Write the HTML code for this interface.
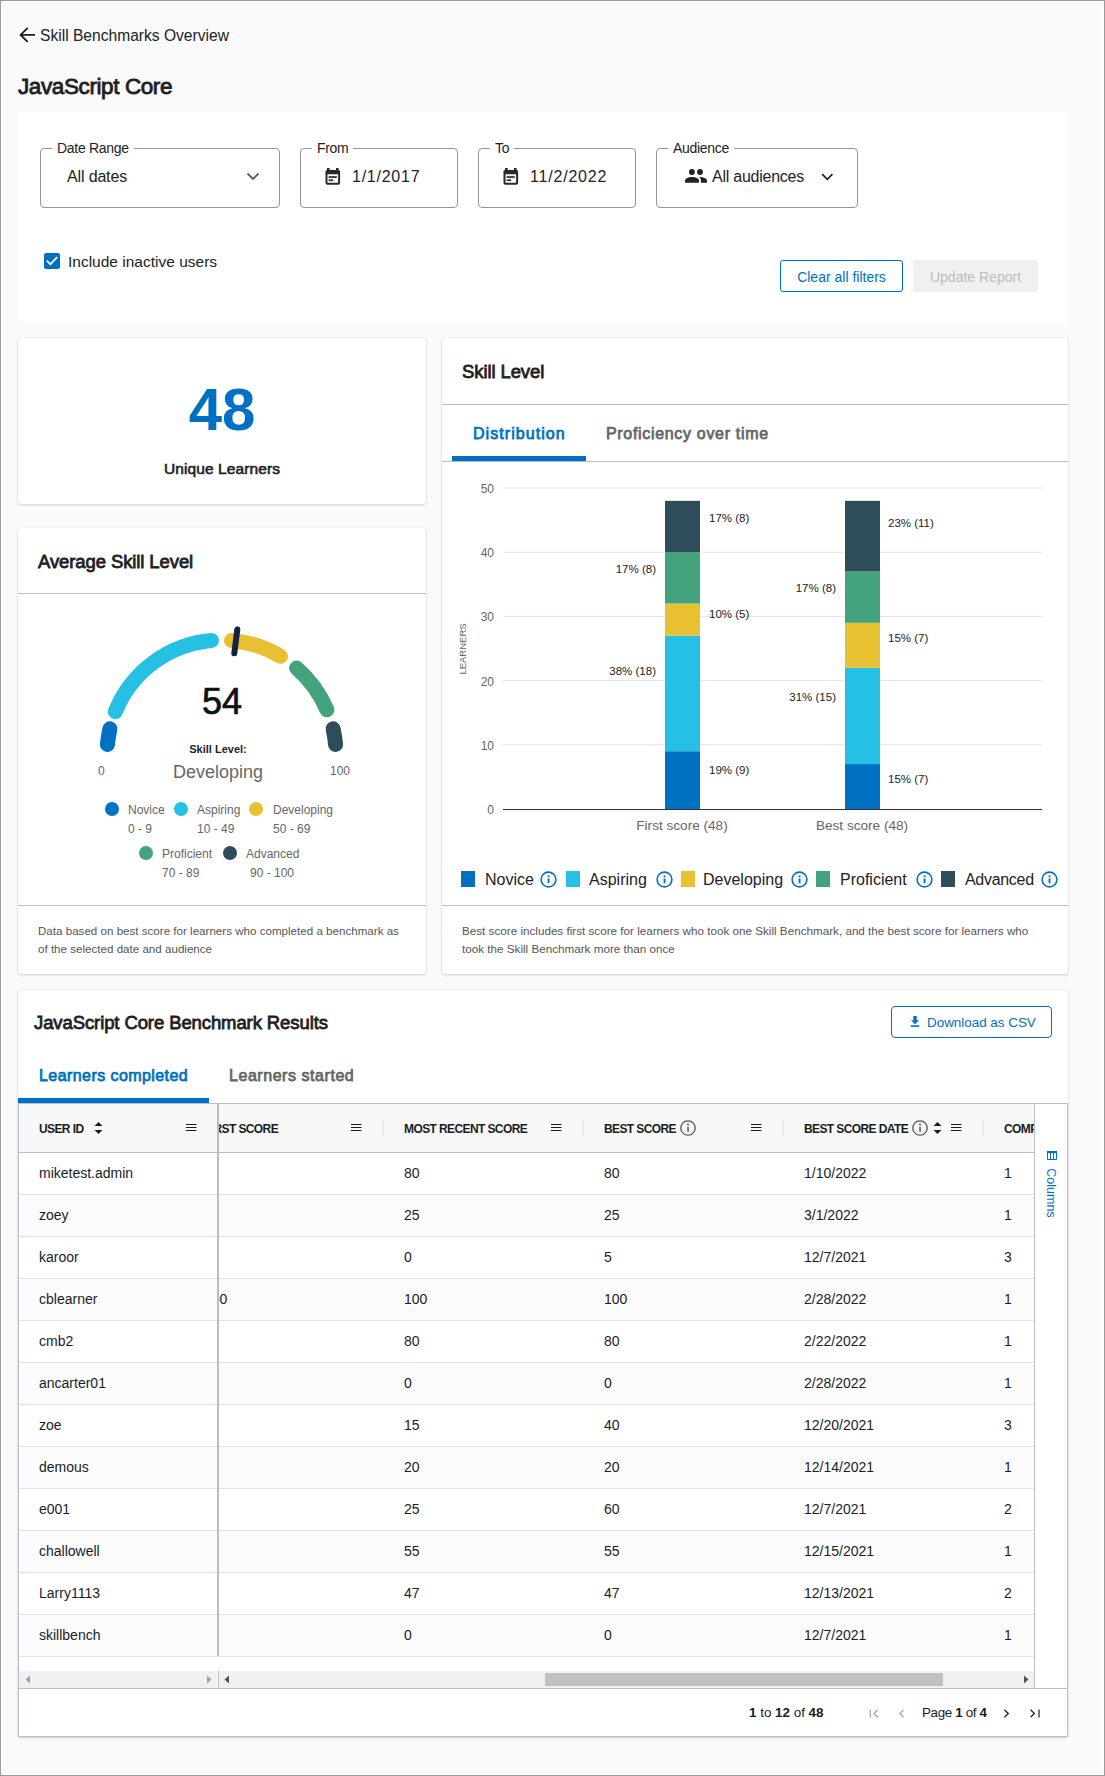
<!DOCTYPE html>
<html><head><meta charset="utf-8">
<style>
*{box-sizing:border-box;margin:0;padding:0}
html,body{width:1105px;height:1776px;overflow:hidden}
body{background:#f9fafb;font-family:"Liberation Sans",sans-serif;color:#1f1f1f;position:relative}
.a{position:absolute;white-space:nowrap}
.frame{position:absolute;left:0;top:0;width:1105px;height:1776px;border:1px solid #9c9c9c;box-shadow:inset 0 0 0 1px #fff;pointer-events:none;z-index:50}
.card{position:absolute;background:#fff;border-radius:3px;box-shadow:0 1px 3px rgba(0,0,0,.16),0 0 1px rgba(0,0,0,.14)}
.fs{position:absolute;border:1px solid #969696;border-radius:4px;background:#fff}
.fs .lg{position:absolute;top:-10px;left:11px;background:#fff;padding:0 5px 0 5px;font-size:14px;color:#222;line-height:18px;letter-spacing:-0.3px}
.hr{position:absolute;height:1px;background:#bdbdbd}
.blue{color:#0070c2}
</style></head><body>
<div class="frame"></div>

<!-- header -->
<svg class="a" style="left:18px;top:27px" width="18" height="16" viewBox="0 0 18 16"><path d="M17 7.9H3M9.7 0.9L2.6 7.9l7.1 7" stroke="#1f1f1f" stroke-width="1.9" fill="none"/></svg>
<div class="a" style="left:40px;top:26px;font-size:15.6px;line-height:19px;color:#222">Skill Benchmarks Overview</div>
<div class="a" style="left:18px;top:74px;font-size:22.5px;line-height:26px;color:#1f1f1f;-webkit-text-stroke:0.85px #1f1f1f;letter-spacing:-0.4px">JavaScript Core</div>

<!-- filter card -->
<div class="card" style="left:18px;top:112px;width:1050px;height:210px;box-shadow:none"></div>
<div class="fs" style="left:40px;top:148px;width:240px;height:60px"><span class="lg">Date Range</span></div>
<div class="a" style="left:67px;top:167px;font-size:16px;line-height:20px;color:#222;letter-spacing:-0.15px">All dates</div>
<svg class="a" style="left:246px;top:172px" width="14" height="9"><path d="M1.5 1.5l5.5 5.5 5.5-5.5" stroke="#5c5c5c" stroke-width="1.9" fill="none"/></svg>

<div class="fs" style="left:300px;top:148px;width:158px;height:60px"><span class="lg">From</span></div>
<svg class="a" style="left:325px;top:167.5px" width="16" height="17" viewBox="0 0 16 17"><rect x="2" y="0" width="2.6" height="3" fill="#2a2a2a"/><rect x="11" y="0" width="2.6" height="3" fill="#2a2a2a"/><rect x="1.5" y="3" width="12.6" height="12.8" rx="1.6" fill="none" stroke="#2a2a2a" stroke-width="2"/><rect x="0.8" y="2.2" width="14" height="4" rx="1" fill="#2a2a2a"/><rect x="3.6" y="8.2" width="8.2" height="1.7" fill="#2a2a2a"/><rect x="3.6" y="11.4" width="4.6" height="1.7" fill="#2a2a2a"/></svg>
<div class="a" style="left:352px;top:167px;font-size:16px;line-height:20px;color:#222;letter-spacing:0.75px">1/1/2017</div>

<div class="fs" style="left:478px;top:148px;width:158px;height:60px"><span class="lg">To</span></div>
<svg class="a" style="left:503px;top:167.5px" width="16" height="17" viewBox="0 0 16 17"><rect x="2" y="0" width="2.6" height="3" fill="#2a2a2a"/><rect x="11" y="0" width="2.6" height="3" fill="#2a2a2a"/><rect x="1.5" y="3" width="12.6" height="12.8" rx="1.6" fill="none" stroke="#2a2a2a" stroke-width="2"/><rect x="0.8" y="2.2" width="14" height="4" rx="1" fill="#2a2a2a"/><rect x="3.6" y="8.2" width="8.2" height="1.7" fill="#2a2a2a"/><rect x="3.6" y="11.4" width="4.6" height="1.7" fill="#2a2a2a"/></svg>
<div class="a" style="left:530px;top:167px;font-size:16px;line-height:20px;color:#222;letter-spacing:0.8px">11/2/2022</div>

<div class="fs" style="left:656px;top:148px;width:202px;height:60px"><span class="lg">Audience</span></div>
<svg class="a" style="left:684px;top:168px" width="24" height="16" viewBox="0 0 24 16"><g fill="#222"><circle cx="7.9" cy="4" r="2.95"/><circle cx="16" cy="4" r="2.95"/><path d="M1.1 14.8v-2.3c0-2.2 3.5-3.6 6.95-3.6s6.95 1.4 6.95 3.6v2.3z"/><path d="M16.9 14.8v-2.3c0-1.4-.6-2.6-1.6-3.5 3.6 0 7.7 1.3 7.7 3.5v2.3z"/></g></svg>
<div class="a" style="left:712px;top:167px;font-size:16px;line-height:20px;color:#222;letter-spacing:-0.25px">All audiences</div>
<svg class="a" style="left:821px;top:172.5px" width="13" height="9"><path d="M1.2 1.2l5.1 5.2 5.1-5.2" stroke="#1f1f1f" stroke-width="1.7" fill="none"/></svg>

<div class="a" style="left:44px;top:253px;width:16px;height:16px;background:#0070c2;border-radius:2px"></div>
<svg class="a" style="left:44px;top:253px" width="16" height="16"><path d="M2.7 7.6L6.4 11.1 13.2 4.2" stroke="#fff" stroke-width="1.9" fill="none"/></svg>
<div class="a" style="left:68px;top:253px;font-size:15.5px;line-height:18px;color:#222">Include inactive users</div>

<div class="a" style="left:780px;top:260px;width:123px;height:32px;border:1px solid #0070c2;border-radius:3px;color:#0070c2;font-size:14px;line-height:32px;text-align:center">Clear all filters</div>
<div class="a" style="left:913px;top:260px;width:125px;height:32px;background:#f0f0f0;border-radius:3px;color:#bdbdbd;font-size:14px;line-height:34px;text-align:center">Update Report</div>

<!-- unique learners -->
<div class="card" style="left:18px;top:338px;width:408px;height:166px"></div>
<div class="a blue" style="left:18px;top:380px;width:408px;text-align:center;font-size:60px;line-height:60px;font-weight:bold">48</div>
<div class="a" style="left:18px;top:459px;width:408px;text-align:center;font-size:15.5px;line-height:20px;color:#222;-webkit-text-stroke:0.6px #222;letter-spacing:0.1px">Unique Learners</div>

<!-- average skill level -->
<div class="card" style="left:18px;top:528px;width:408px;height:446px"></div>
<div class="a" style="left:38px;top:551px;font-size:18.5px;line-height:22px;color:#1f1f1f;-webkit-text-stroke:0.8px #1f1f1f;letter-spacing:-0.1px">Average Skill Level</div>
<div class="hr" style="left:18px;top:593px;width:408px"></div>
<div class="hr" style="left:18px;top:905px;width:408px"></div>
<div class="a" style="left:38px;top:922px;font-size:11.6px;line-height:17.6px;color:#555;white-space:normal;width:368px">Data based on best score for learners who completed a benchmark as of the selected date and audience</div>


<!-- gauge -->
<svg class="a" style="left:0;top:0" width="450" height="900">
<g fill="none" stroke-width="15" stroke-linecap="round">
<path d="M107.44 744.52 A114.5 114.5 0 0 1 109.93 728.74" stroke="#0070c2"/>
<path d="M115.34 711.61 A114.5 114.5 0 0 1 211.52 640.44" stroke="#25c0e4"/>
<path d="M231.48 640.44 A114.5 114.5 0 0 1 280.47 656.35" stroke="#e8c132"/>
<path d="M296.62 668.09 A114.5 114.5 0 0 1 326.90 709.76" stroke="#42a37c"/>
<path d="M333.07 728.74 A114.5 114.5 0 0 1 335.56 744.52" stroke="#2e4c5a"/>
</g>
<path d="M234.3 653.3L237.3 629.5" stroke="#172040" stroke-width="6" stroke-linecap="round"/>
<circle cx="112" cy="809" r="7" fill="#0070c2"/>
<circle cx="181" cy="809" r="7" fill="#25c0e4"/>
<circle cx="256" cy="809" r="7" fill="#e8c132"/>
<circle cx="146" cy="853" r="7" fill="#42a37c"/>
<circle cx="230" cy="853" r="7" fill="#2e4c5a"/>
</svg>
<div class="a" style="left:18px;top:682px;width:408px;text-align:center;font-size:36px;line-height:40px;color:#111;-webkit-text-stroke:0.7px #111">54</div>
<div class="a" style="left:14px;top:742px;width:408px;text-align:center;font-size:11px;line-height:14px;font-weight:bold;color:#1f1f1f">Skill Level:</div>
<div class="a" style="left:18px;top:761px;width:400px;text-align:center;font-size:18px;line-height:22px;color:#666">Developing</div>
<div class="a" style="left:98px;top:765px;font-size:12px;line-height:13px;color:#666">0</div>
<div class="a" style="left:330px;top:765px;font-size:12px;line-height:13px;color:#666">100</div>
<div class="a" style="left:128px;top:803px;font-size:12px;line-height:15px;color:#666">Novice</div>
<div class="a" style="left:128px;top:822px;font-size:12px;line-height:15px;color:#666">0 - 9</div>
<div class="a" style="left:197px;top:803px;font-size:12px;line-height:15px;color:#666">Aspiring</div>
<div class="a" style="left:197px;top:822px;font-size:12px;line-height:15px;color:#666">10 - 49</div>
<div class="a" style="left:273px;top:803px;font-size:12px;line-height:15px;color:#666">Developing</div>
<div class="a" style="left:273px;top:822px;font-size:12px;line-height:15px;color:#666">50 - 69</div>
<div class="a" style="left:162px;top:847px;font-size:12px;line-height:15px;color:#666">Proficient</div>
<div class="a" style="left:162px;top:866px;font-size:12px;line-height:15px;color:#666">70 - 89</div>
<div class="a" style="left:246px;top:847px;font-size:12px;line-height:15px;color:#666">Advanced</div>
<div class="a" style="left:250px;top:866px;font-size:12px;line-height:15px;color:#666">90 - 100</div>

<!-- skill level -->
<div class="card" style="left:442px;top:338px;width:626px;height:636px"></div>
<div class="a" style="left:462px;top:361px;font-size:18.5px;line-height:22px;color:#1f1f1f;-webkit-text-stroke:0.8px #1f1f1f;letter-spacing:-0.1px">Skill Level</div>
<div class="hr" style="left:442px;top:404px;width:626px"></div>
<div class="a blue" style="left:473px;top:424px;font-size:16px;line-height:20px;-webkit-text-stroke:0.75px #0070c2;letter-spacing:1.05px">Distribution</div>
<div class="a" style="left:606px;top:424px;font-size:16px;line-height:20px;color:#666;-webkit-text-stroke:0.75px #666;letter-spacing:0.68px">Proficiency over time</div>
<div class="a" style="left:452px;top:456px;width:134px;height:5px;background:#0070c2"></div>
<div class="hr" style="left:442px;top:461px;width:626px"></div>
<!-- chart -->
<svg class="a" style="left:0;top:0" width="1105" height="900">
<rect x="503" y="744.3" width="539" height="1" fill="#e3e3e3"/>
<rect x="503" y="680.1" width="539" height="1" fill="#e3e3e3"/>
<rect x="503" y="615.9" width="539" height="1" fill="#e3e3e3"/>
<rect x="503" y="551.7" width="539" height="1" fill="#e3e3e3"/>
<rect x="503" y="487.5" width="539" height="1" fill="#e3e3e3"/>
<rect x="503" y="809" width="539" height="1" fill="#333"/>
<rect x="665" y="751.22" width="35" height="57.78" fill="#0070c2"/>
<rect x="665" y="635.66" width="35" height="115.56" fill="#25c0e4"/>
<rect x="665" y="603.56" width="35" height="32.10" fill="#e8c132"/>
<rect x="665" y="552.20" width="35" height="51.36" fill="#42a37c"/>
<rect x="665" y="500.84" width="35" height="51.36" fill="#2e4c5a"/>
<rect x="845" y="764.06" width="35" height="44.94" fill="#0070c2"/>
<rect x="845" y="667.76" width="35" height="96.30" fill="#25c0e4"/>
<rect x="845" y="622.82" width="35" height="44.94" fill="#e8c132"/>
<rect x="845" y="571.46" width="35" height="51.36" fill="#42a37c"/>
<rect x="845" y="500.84" width="35" height="70.62" fill="#2e4c5a"/>
</svg>
<div class="a" style="left:453px;top:803px;width:41px;text-align:right;font-size:12px;line-height:14px;color:#666">0</div>
<div class="a" style="left:453px;top:739px;width:41px;text-align:right;font-size:12px;line-height:14px;color:#666">10</div>
<div class="a" style="left:453px;top:675px;width:41px;text-align:right;font-size:12px;line-height:14px;color:#666">20</div>
<div class="a" style="left:453px;top:610px;width:41px;text-align:right;font-size:12px;line-height:14px;color:#666">30</div>
<div class="a" style="left:453px;top:546px;width:41px;text-align:right;font-size:12px;line-height:14px;color:#666">40</div>
<div class="a" style="left:453px;top:482px;width:41px;text-align:right;font-size:12px;line-height:14px;color:#666">50</div>
<div class="a" style="left:709px;top:511px;font-size:11.5px;line-height:14px;color:#222">17% (8)</div>
<div class="a" style="left:556px;top:562px;width:100px;text-align:right;font-size:11.5px;line-height:14px;color:#222">17% (8)</div>
<div class="a" style="left:709px;top:607px;font-size:11.5px;line-height:14px;color:#222">10% (5)</div>
<div class="a" style="left:556px;top:664px;width:100px;text-align:right;font-size:11.5px;line-height:14px;color:#222">38% (18)</div>
<div class="a" style="left:709px;top:763px;font-size:11.5px;line-height:14px;color:#222">19% (9)</div>
<div class="a" style="left:888px;top:516px;font-size:11.5px;line-height:14px;color:#222">23% (11)</div>
<div class="a" style="left:736px;top:581px;width:100px;text-align:right;font-size:11.5px;line-height:14px;color:#222">17% (8)</div>
<div class="a" style="left:888px;top:631px;font-size:11.5px;line-height:14px;color:#222">15% (7)</div>
<div class="a" style="left:736px;top:690px;width:100px;text-align:right;font-size:11.5px;line-height:14px;color:#222">31% (15)</div>
<div class="a" style="left:888px;top:772px;font-size:11.5px;line-height:14px;color:#222">15% (7)</div>
<div class="a" style="left:582px;top:817px;width:200px;text-align:center;font-size:13.6px;line-height:18px;color:#666">First score (48)</div>
<div class="a" style="left:762px;top:817px;width:200px;text-align:center;font-size:13.6px;line-height:18px;color:#666">Best score (48)</div>
<div class="a" style="left:413px;top:643px;width:100px;text-align:center;font-size:9.5px;line-height:12px;color:#666;transform:rotate(-90deg)">LEARNERS</div>
<div class="a" style="left:461px;top:871px;width:14px;height:16px;background:#0070c2"></div>
<div class="a" style="left:485px;top:870px;font-size:16px;line-height:20px;color:#222">Novice</div>
<svg class="a" style="left:540.4px;top:870.5px" width="17" height="17" viewBox="0 0 17 17"><circle cx="8.5" cy="8.5" r="7.4" fill="none" stroke="#0070c2" stroke-width="1.6"/><rect x="7.6" y="7.4" width="1.9" height="4.8" fill="#0070c2"/><rect x="7.6" y="4.4" width="1.9" height="1.8" fill="#0070c2"/></svg>
<div class="a" style="left:566px;top:871px;width:14px;height:16px;background:#25c0e4"></div>
<div class="a" style="left:589px;top:870px;font-size:16px;line-height:20px;color:#222">Aspiring</div>
<svg class="a" style="left:656.4px;top:870.5px" width="17" height="17" viewBox="0 0 17 17"><circle cx="8.5" cy="8.5" r="7.4" fill="none" stroke="#0070c2" stroke-width="1.6"/><rect x="7.6" y="7.4" width="1.9" height="4.8" fill="#0070c2"/><rect x="7.6" y="4.4" width="1.9" height="1.8" fill="#0070c2"/></svg>
<div class="a" style="left:681px;top:871px;width:14px;height:16px;background:#e8c132"></div>
<div class="a" style="left:703px;top:870px;font-size:16px;line-height:20px;color:#222">Developing</div>
<svg class="a" style="left:791.4px;top:870.5px" width="17" height="17" viewBox="0 0 17 17"><circle cx="8.5" cy="8.5" r="7.4" fill="none" stroke="#0070c2" stroke-width="1.6"/><rect x="7.6" y="7.4" width="1.9" height="4.8" fill="#0070c2"/><rect x="7.6" y="4.4" width="1.9" height="1.8" fill="#0070c2"/></svg>
<div class="a" style="left:816px;top:871px;width:14px;height:16px;background:#42a37c"></div>
<div class="a" style="left:840px;top:870px;font-size:16px;line-height:20px;color:#222">Proficient</div>
<svg class="a" style="left:916.4px;top:870.5px" width="17" height="17" viewBox="0 0 17 17"><circle cx="8.5" cy="8.5" r="7.4" fill="none" stroke="#0070c2" stroke-width="1.6"/><rect x="7.6" y="7.4" width="1.9" height="4.8" fill="#0070c2"/><rect x="7.6" y="4.4" width="1.9" height="1.8" fill="#0070c2"/></svg>
<div class="a" style="left:941px;top:871px;width:14px;height:16px;background:#2e4c5a"></div>
<div class="a" style="left:965px;top:870px;font-size:16px;line-height:20px;color:#222;letter-spacing:-0.3px">Advanced</div>
<svg class="a" style="left:1041.4px;top:870.5px" width="17" height="17" viewBox="0 0 17 17"><circle cx="8.5" cy="8.5" r="7.4" fill="none" stroke="#0070c2" stroke-width="1.6"/><rect x="7.6" y="7.4" width="1.9" height="4.8" fill="#0070c2"/><rect x="7.6" y="4.4" width="1.9" height="1.8" fill="#0070c2"/></svg>
<div class="hr" style="left:442px;top:905px;width:626px"></div>
<div class="a" style="left:462px;top:922px;font-size:11.68px;line-height:17.6px;color:#555;white-space:normal;width:574px">Best score includes first score for learners who took one Skill Benchmark, and the best score for learners who took the Skill Benchmark more than once</div>

<!-- results card -->
<div class="card" style="left:18px;top:990px;width:1050px;height:747px"></div>
<div class="a" style="left:34px;top:1012px;font-size:18.5px;line-height:22px;color:#1f1f1f;-webkit-text-stroke:0.8px #1f1f1f;letter-spacing:-0.1px">JavaScript Core Benchmark Results</div>
<div class="a" style="left:891px;top:1006px;width:161px;height:32px;border:1px solid #0070c2;border-radius:4px"></div>
<svg class="a" style="left:910px;top:1016px" width="10" height="11" viewBox="0 0 10 11"><path d="M3.3 0h3.4v4.2H9L5 8.2 1 4.2h2.3z" fill="#0070c2"/><rect x="0.8" y="9.3" width="8.4" height="1.6" fill="#0070c2"/></svg>
<div class="a" style="left:927px;top:1014px;font-size:13.5px;line-height:18px;color:#0070c2;letter-spacing:-0.05px">Download as CSV</div>
<div class="a blue" style="left:39px;top:1066px;font-size:16px;line-height:20px;-webkit-text-stroke:0.75px #0070c2;letter-spacing:0.43px">Learners completed</div>
<div class="a" style="left:229px;top:1066px;font-size:16px;line-height:20px;color:#666;-webkit-text-stroke:0.75px #666;letter-spacing:0.55px">Learners started</div>
<div class="a" style="left:18px;top:1098px;width:191px;height:5px;background:#0070c2"></div>

<!-- table -->
<div class="a" style="left:18px;top:1103px;width:1050px;height:1px;background:#babfc7"></div>
<div class="a" style="left:18px;top:1103px;width:1px;height:634px;background:#babfc7"></div>
<div class="a" style="left:1067px;top:1103px;width:1px;height:634px;background:#babfc7"></div>
<div class="a" style="left:18px;top:1736px;width:1050px;height:1px;background:#babfc7"></div>
<div class="a" style="left:19px;top:1104px;width:1015px;height:48px;background:#f8f8f8"></div>
<div class="a" style="left:19px;top:1152px;width:1015px;height:1px;background:#babfc7"></div>
<div class="a" style="left:19px;top:1153px;width:1015px;height:41px;background:#fff"></div>
<div class="a" style="left:19px;top:1194px;width:1015px;height:1px;background:#dde2eb"></div>
<div class="a" style="left:19px;top:1195px;width:1015px;height:41px;background:#fcfcfc"></div>
<div class="a" style="left:19px;top:1236px;width:1015px;height:1px;background:#dde2eb"></div>
<div class="a" style="left:19px;top:1237px;width:1015px;height:41px;background:#fff"></div>
<div class="a" style="left:19px;top:1278px;width:1015px;height:1px;background:#dde2eb"></div>
<div class="a" style="left:19px;top:1279px;width:1015px;height:41px;background:#fcfcfc"></div>
<div class="a" style="left:19px;top:1320px;width:1015px;height:1px;background:#dde2eb"></div>
<div class="a" style="left:19px;top:1321px;width:1015px;height:41px;background:#fff"></div>
<div class="a" style="left:19px;top:1362px;width:1015px;height:1px;background:#dde2eb"></div>
<div class="a" style="left:19px;top:1363px;width:1015px;height:41px;background:#fcfcfc"></div>
<div class="a" style="left:19px;top:1404px;width:1015px;height:1px;background:#dde2eb"></div>
<div class="a" style="left:19px;top:1405px;width:1015px;height:41px;background:#fff"></div>
<div class="a" style="left:19px;top:1446px;width:1015px;height:1px;background:#dde2eb"></div>
<div class="a" style="left:19px;top:1447px;width:1015px;height:41px;background:#fcfcfc"></div>
<div class="a" style="left:19px;top:1488px;width:1015px;height:1px;background:#dde2eb"></div>
<div class="a" style="left:19px;top:1489px;width:1015px;height:41px;background:#fff"></div>
<div class="a" style="left:19px;top:1530px;width:1015px;height:1px;background:#dde2eb"></div>
<div class="a" style="left:19px;top:1531px;width:1015px;height:41px;background:#fcfcfc"></div>
<div class="a" style="left:19px;top:1572px;width:1015px;height:1px;background:#dde2eb"></div>
<div class="a" style="left:19px;top:1573px;width:1015px;height:41px;background:#fff"></div>
<div class="a" style="left:19px;top:1614px;width:1015px;height:1px;background:#dde2eb"></div>
<div class="a" style="left:19px;top:1615px;width:1015px;height:41px;background:#fcfcfc"></div>
<div class="a" style="left:19px;top:1656px;width:1015px;height:1px;background:#dde2eb"></div>
<div class="a" style="left:39px;top:1121px;font-size:12px;line-height:16px;font-weight:bold;color:#181d1f;letter-spacing:-0.6px">USER ID</div>
<div class="a" style="left:219px;top:1104px;width:815px;height:48px;overflow:hidden"><div class="a" style="left:-15px;top:17px;font-size:12px;line-height:16px;font-weight:bold;color:#181d1f;letter-spacing:-0.6px">FIRST SCORE</div></div>
<div class="a" style="left:404px;top:1121px;font-size:12px;line-height:16px;font-weight:bold;color:#181d1f;letter-spacing:-0.6px">MOST RECENT SCORE</div>
<div class="a" style="left:604px;top:1121px;font-size:12px;line-height:16px;font-weight:bold;color:#181d1f;letter-spacing:-0.6px">BEST SCORE</div>
<div class="a" style="left:804px;top:1121px;font-size:12px;line-height:16px;font-weight:bold;color:#181d1f;letter-spacing:-0.6px">BEST SCORE DATE</div>
<div class="a" style="left:1004px;top:1121px;width:30px;overflow:hidden;font-size:12px;line-height:16px;font-weight:bold;color:#181d1f;letter-spacing:-0.6px">COMPLETED</div>
<svg class="a" style="left:186px;top:1123px" width="11" height="10"><path d="M0 1.5h10.5M0 4.5h10.5M0 7.5h10.5" stroke="#181d1f" stroke-width="1.15"/></svg>
<svg class="a" style="left:351px;top:1123px" width="11" height="10"><path d="M0 1.5h10.5M0 4.5h10.5M0 7.5h10.5" stroke="#181d1f" stroke-width="1.15"/></svg>
<svg class="a" style="left:551px;top:1123px" width="11" height="10"><path d="M0 1.5h10.5M0 4.5h10.5M0 7.5h10.5" stroke="#181d1f" stroke-width="1.15"/></svg>
<svg class="a" style="left:751px;top:1123px" width="11" height="10"><path d="M0 1.5h10.5M0 4.5h10.5M0 7.5h10.5" stroke="#181d1f" stroke-width="1.15"/></svg>
<svg class="a" style="left:951px;top:1123px" width="11" height="10"><path d="M0 1.5h10.5M0 4.5h10.5M0 7.5h10.5" stroke="#181d1f" stroke-width="1.15"/></svg>
<div class="a" style="left:383px;top:1121px;width:1px;height:14px;background:#dde2eb"></div>
<div class="a" style="left:583px;top:1121px;width:1px;height:14px;background:#dde2eb"></div>
<div class="a" style="left:783px;top:1121px;width:1px;height:14px;background:#dde2eb"></div>
<div class="a" style="left:983px;top:1121px;width:1px;height:14px;background:#dde2eb"></div>
<svg class="a" style="left:94px;top:1121px" width="9" height="14"><path d="M4.5 1L8.5 5H0.5z M4.5 13L8.5 9H0.5z" fill="#181d1f"/></svg>
<svg class="a" style="left:933px;top:1121px" width="9" height="14"><path d="M4.5 1L8.5 5H0.5z M4.5 13L8.5 9H0.5z" fill="#181d1f"/></svg>
<svg class="a" style="left:680px;top:1120px" width="16" height="16" viewBox="0 0 16 16"><circle cx="8" cy="8" r="7.2" fill="none" stroke="#555" stroke-width="1.3"/><rect x="7.3" y="6.8" width="1.5" height="5" fill="#555"/><circle cx="8" cy="4.6" r="1" fill="#555"/></svg>
<svg class="a" style="left:912px;top:1120px" width="16" height="16" viewBox="0 0 16 16"><circle cx="8" cy="8" r="7.2" fill="none" stroke="#555" stroke-width="1.3"/><rect x="7.3" y="6.8" width="1.5" height="5" fill="#555"/><circle cx="8" cy="4.6" r="1" fill="#555"/></svg>
<div class="a" style="left:39px;top:1164px;font-size:14px;line-height:18px;color:#181d1f">miketest.admin</div>
<div class="a" style="left:404px;top:1164px;font-size:14px;line-height:18px;color:#181d1f">80</div>
<div class="a" style="left:604px;top:1164px;font-size:14px;line-height:18px;color:#181d1f">80</div>
<div class="a" style="left:804px;top:1164px;font-size:14px;line-height:18px;color:#181d1f">1/10/2022</div>
<div class="a" style="left:1004px;top:1164px;font-size:14px;line-height:18px;color:#181d1f">1</div>
<div class="a" style="left:39px;top:1206px;font-size:14px;line-height:18px;color:#181d1f">zoey</div>
<div class="a" style="left:404px;top:1206px;font-size:14px;line-height:18px;color:#181d1f">25</div>
<div class="a" style="left:604px;top:1206px;font-size:14px;line-height:18px;color:#181d1f">25</div>
<div class="a" style="left:804px;top:1206px;font-size:14px;line-height:18px;color:#181d1f">3/1/2022</div>
<div class="a" style="left:1004px;top:1206px;font-size:14px;line-height:18px;color:#181d1f">1</div>
<div class="a" style="left:39px;top:1248px;font-size:14px;line-height:18px;color:#181d1f">karoor</div>
<div class="a" style="left:404px;top:1248px;font-size:14px;line-height:18px;color:#181d1f">0</div>
<div class="a" style="left:604px;top:1248px;font-size:14px;line-height:18px;color:#181d1f">5</div>
<div class="a" style="left:804px;top:1248px;font-size:14px;line-height:18px;color:#181d1f">12/7/2021</div>
<div class="a" style="left:1004px;top:1248px;font-size:14px;line-height:18px;color:#181d1f">3</div>
<div class="a" style="left:39px;top:1290px;font-size:14px;line-height:18px;color:#181d1f">cblearner</div>
<div class="a" style="left:219px;top:1290px;width:100px;height:20px;overflow:hidden"><div class="a" style="left:-15px;top:0;font-size:14px;line-height:18px;color:#181d1f">100</div></div>
<div class="a" style="left:404px;top:1290px;font-size:14px;line-height:18px;color:#181d1f">100</div>
<div class="a" style="left:604px;top:1290px;font-size:14px;line-height:18px;color:#181d1f">100</div>
<div class="a" style="left:804px;top:1290px;font-size:14px;line-height:18px;color:#181d1f">2/28/2022</div>
<div class="a" style="left:1004px;top:1290px;font-size:14px;line-height:18px;color:#181d1f">1</div>
<div class="a" style="left:39px;top:1332px;font-size:14px;line-height:18px;color:#181d1f">cmb2</div>
<div class="a" style="left:404px;top:1332px;font-size:14px;line-height:18px;color:#181d1f">80</div>
<div class="a" style="left:604px;top:1332px;font-size:14px;line-height:18px;color:#181d1f">80</div>
<div class="a" style="left:804px;top:1332px;font-size:14px;line-height:18px;color:#181d1f">2/22/2022</div>
<div class="a" style="left:1004px;top:1332px;font-size:14px;line-height:18px;color:#181d1f">1</div>
<div class="a" style="left:39px;top:1374px;font-size:14px;line-height:18px;color:#181d1f">ancarter01</div>
<div class="a" style="left:404px;top:1374px;font-size:14px;line-height:18px;color:#181d1f">0</div>
<div class="a" style="left:604px;top:1374px;font-size:14px;line-height:18px;color:#181d1f">0</div>
<div class="a" style="left:804px;top:1374px;font-size:14px;line-height:18px;color:#181d1f">2/28/2022</div>
<div class="a" style="left:1004px;top:1374px;font-size:14px;line-height:18px;color:#181d1f">1</div>
<div class="a" style="left:39px;top:1416px;font-size:14px;line-height:18px;color:#181d1f">zoe</div>
<div class="a" style="left:404px;top:1416px;font-size:14px;line-height:18px;color:#181d1f">15</div>
<div class="a" style="left:604px;top:1416px;font-size:14px;line-height:18px;color:#181d1f">40</div>
<div class="a" style="left:804px;top:1416px;font-size:14px;line-height:18px;color:#181d1f">12/20/2021</div>
<div class="a" style="left:1004px;top:1416px;font-size:14px;line-height:18px;color:#181d1f">3</div>
<div class="a" style="left:39px;top:1458px;font-size:14px;line-height:18px;color:#181d1f">demous</div>
<div class="a" style="left:404px;top:1458px;font-size:14px;line-height:18px;color:#181d1f">20</div>
<div class="a" style="left:604px;top:1458px;font-size:14px;line-height:18px;color:#181d1f">20</div>
<div class="a" style="left:804px;top:1458px;font-size:14px;line-height:18px;color:#181d1f">12/14/2021</div>
<div class="a" style="left:1004px;top:1458px;font-size:14px;line-height:18px;color:#181d1f">1</div>
<div class="a" style="left:39px;top:1500px;font-size:14px;line-height:18px;color:#181d1f">e001</div>
<div class="a" style="left:404px;top:1500px;font-size:14px;line-height:18px;color:#181d1f">25</div>
<div class="a" style="left:604px;top:1500px;font-size:14px;line-height:18px;color:#181d1f">60</div>
<div class="a" style="left:804px;top:1500px;font-size:14px;line-height:18px;color:#181d1f">12/7/2021</div>
<div class="a" style="left:1004px;top:1500px;font-size:14px;line-height:18px;color:#181d1f">2</div>
<div class="a" style="left:39px;top:1542px;font-size:14px;line-height:18px;color:#181d1f">challowell</div>
<div class="a" style="left:404px;top:1542px;font-size:14px;line-height:18px;color:#181d1f">55</div>
<div class="a" style="left:604px;top:1542px;font-size:14px;line-height:18px;color:#181d1f">55</div>
<div class="a" style="left:804px;top:1542px;font-size:14px;line-height:18px;color:#181d1f">12/15/2021</div>
<div class="a" style="left:1004px;top:1542px;font-size:14px;line-height:18px;color:#181d1f">1</div>
<div class="a" style="left:39px;top:1584px;font-size:14px;line-height:18px;color:#181d1f">Larry1113</div>
<div class="a" style="left:404px;top:1584px;font-size:14px;line-height:18px;color:#181d1f">47</div>
<div class="a" style="left:604px;top:1584px;font-size:14px;line-height:18px;color:#181d1f">47</div>
<div class="a" style="left:804px;top:1584px;font-size:14px;line-height:18px;color:#181d1f">12/13/2021</div>
<div class="a" style="left:1004px;top:1584px;font-size:14px;line-height:18px;color:#181d1f">2</div>
<div class="a" style="left:39px;top:1626px;font-size:14px;line-height:18px;color:#181d1f">skillbench</div>
<div class="a" style="left:404px;top:1626px;font-size:14px;line-height:18px;color:#181d1f">0</div>
<div class="a" style="left:604px;top:1626px;font-size:14px;line-height:18px;color:#181d1f">0</div>
<div class="a" style="left:804px;top:1626px;font-size:14px;line-height:18px;color:#181d1f">12/7/2021</div>
<div class="a" style="left:1004px;top:1626px;font-size:14px;line-height:18px;color:#181d1f">1</div>
<div class="a" style="left:217px;top:1104px;width:2px;height:552px;background:#bcbcbc"></div>
<div class="a" style="left:218px;top:1671px;width:1px;height:17px;background:#babfc7"></div>
<div class="a" style="left:19px;top:1671px;width:198px;height:17px;background:#f1f1f1"></div>
<div class="a" style="left:219px;top:1671px;width:815px;height:17px;background:#f1f1f1"></div>
<svg class="a" style="left:24px;top:1675px" width="8" height="9"><path d="M6 0.5v8L1.5 4.5z" fill="#a3a3a3"/></svg>
<svg class="a" style="left:205px;top:1675px" width="8" height="9"><path d="M2 0.5v8L6.5 4.5z" fill="#a3a3a3"/></svg>
<svg class="a" style="left:223px;top:1675px" width="8" height="9"><path d="M6 0.5v8L1.5 4.5z" fill="#505050"/></svg>
<svg class="a" style="left:1022px;top:1675px" width="8" height="9"><path d="M2 0.5v8L6.5 4.5z" fill="#505050"/></svg>
<div class="a" style="left:545px;top:1673px;width:398px;height:13px;background:#c1c1c1"></div>
<div class="a" style="left:19px;top:1688px;width:1049px;height:1px;background:#babfc7"></div>
<div class="a" style="left:1034px;top:1104px;width:1px;height:584px;background:#babfc7"></div>
<svg class="a" style="left:1047px;top:1151px" width="10" height="9"><path d="M0.5 0.5h9v8h-9z" fill="none" stroke="#0070c2" stroke-width="1"/><path d="M0 0h10v2.2H0z" fill="#0070c2"/><path d="M3.5 2v6.5M6.5 2v6.5" stroke="#0070c2" stroke-width="1"/></svg>
<div class="a" style="left:1021px;top:1185px;width:60px;height:16px;text-align:center;font-size:12.5px;line-height:16px;color:#0070c2;transform:rotate(90deg)">Columns</div>
<div class="a" style="left:749px;top:1704px;font-size:13.4px;line-height:18px;color:#181d1f"><b>1</b> to <b>12</b> of <b>48</b></div>
<div class="a" style="left:922px;top:1704px;font-size:13.4px;line-height:18px;color:#181d1f;letter-spacing:-0.35px">Page <b>1</b> of <b>4</b></div>
<svg class="a" style="left:868px;top:1708px" width="12" height="11"><path d="M2.3 1.5v8M9.8 1.8L6 5.5l3.8 3.7" stroke="#a0a0a0" stroke-width="1.2" fill="none"/></svg>
<svg class="a" style="left:898px;top:1708px" width="8" height="11"><path d="M5.6 1.8L1.9 5.5l3.7 3.7" stroke="#a0a0a0" stroke-width="1.2" fill="none"/></svg>
<svg class="a" style="left:1003px;top:1708px" width="8" height="11"><path d="M1.4 1.8L5.3 5.5 1.4 9.2" stroke="#181d1f" stroke-width="1.3" fill="none"/></svg>
<svg class="a" style="left:1029px;top:1708px" width="12" height="11"><path d="M1.6 1.8L5.4 5.5 1.6 9.2M10 1.5v8" stroke="#181d1f" stroke-width="1.2" fill="none"/></svg>
</body></html>
